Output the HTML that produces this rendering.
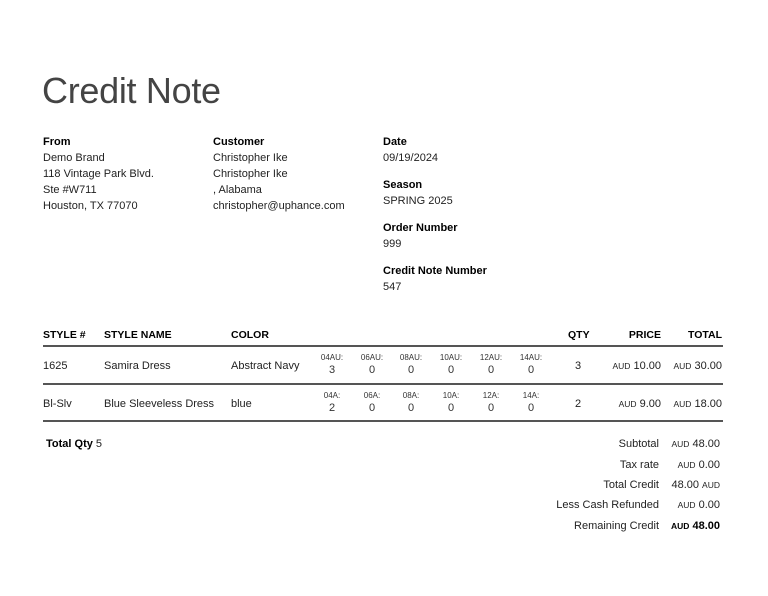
<!DOCTYPE html>
<html><head><style>
body{margin:0;width:768px;height:596px;background:#fff;font-family:"Liberation Sans",Arial,sans-serif;color:#222;position:relative;overflow:hidden}
.a{position:absolute;white-space:nowrap}
.t{font-size:11px;line-height:16px}
b{font-weight:bold;color:#000}
.h{font-size:10.5px;font-weight:bold;color:#000}
.sz{position:absolute;width:40px;text-align:center;color:#333}
.sz .l{font-size:8px;line-height:10px}
.sz .v{font-size:11px;line-height:14px}
.r{text-align:right}
.c{font-size:8.5px}
.line{position:absolute;left:43px;width:680px;height:1.5px;background:#555}
</style></head><body>
<div class="a" style="left:42px;top:70px;font-size:36px;color:#444;font-weight:300;letter-spacing:-0.3px">Credit Note</div>

<div class="a t" style="left:43px;top:134px"><b>From</b><br>Demo Brand<br>118 Vintage Park Blvd.<br>Ste #W711<br>Houston, TX 77070</div>
<div class="a t" style="left:213px;top:134px"><b>Customer</b><br>Christopher Ike<br>Christopher Ike<br>, Alabama<br>christopher@uphance.com</div>
<div class="a t" style="left:383px;top:134px"><b>Date</b><br>09/19/2024</div>
<div class="a t" style="left:383px;top:177px"><b>Season</b><br>SPRING 2025</div>
<div class="a t" style="left:383px;top:220px"><b>Order Number</b><br>999</div>
<div class="a t" style="left:383px;top:263px"><b>Credit Note Number</b><br>547</div>

<div class="a h" style="left:43px;top:329px">STYLE #</div>
<div class="a h" style="left:104px;top:329px">STYLE NAME</div>
<div class="a h" style="left:231px;top:329px">COLOR</div>
<div class="a h" style="left:568px;top:329px">QTY</div>
<div class="a h r" style="right:107px;top:329px">PRICE</div>
<div class="a h r" style="right:46px;top:329px">TOTAL</div>
<div class="line" style="top:345px"></div>

<div class="a t" style="left:43px;top:358px">1625</div>
<div class="a t" style="left:104px;top:358px">Samira Dress</div>
<div class="a t" style="left:231px;top:358px">Abstract Navy</div>
<div class="sz" style="left:312px;top:353px"><div class="l">04AU:</div><div class="v">3</div></div>
<div class="sz" style="left:352px;top:353px"><div class="l">06AU:</div><div class="v">0</div></div>
<div class="sz" style="left:391px;top:353px"><div class="l">08AU:</div><div class="v">0</div></div>
<div class="sz" style="left:431px;top:353px"><div class="l">10AU:</div><div class="v">0</div></div>
<div class="sz" style="left:471px;top:353px"><div class="l">12AU:</div><div class="v">0</div></div>
<div class="sz" style="left:511px;top:353px"><div class="l">14AU:</div><div class="v">0</div></div>
<div class="a t" style="left:575px;top:358px">3</div>
<div class="a t r" style="right:107px;top:358px"><span class="c">AUD</span> 10.00</div>
<div class="a t r" style="right:46px;top:358px"><span class="c">AUD</span> 30.00</div>
<div class="line" style="top:383px"></div>

<div class="a t" style="left:43px;top:396px">Bl-Slv</div>
<div class="a t" style="left:104px;top:396px">Blue Sleeveless Dress</div>
<div class="a t" style="left:231px;top:396px">blue</div>
<div class="sz" style="left:312px;top:391px"><div class="l">04A:</div><div class="v">2</div></div>
<div class="sz" style="left:352px;top:391px"><div class="l">06A:</div><div class="v">0</div></div>
<div class="sz" style="left:391px;top:391px"><div class="l">08A:</div><div class="v">0</div></div>
<div class="sz" style="left:431px;top:391px"><div class="l">10A:</div><div class="v">0</div></div>
<div class="sz" style="left:471px;top:391px"><div class="l">12A:</div><div class="v">0</div></div>
<div class="sz" style="left:511px;top:391px"><div class="l">14A:</div><div class="v">0</div></div>
<div class="a t" style="left:575px;top:396px">2</div>
<div class="a t r" style="right:107px;top:396px"><span class="c">AUD</span> 9.00</div>
<div class="a t r" style="right:46px;top:396px"><span class="c">AUD</span> 18.00</div>
<div class="line" style="top:420px"></div>

<div class="a t" style="left:46px;top:436px"><b>Total Qty</b> 5</div>
<div class="a t r" style="right:109px;top:436px">Subtotal</div>
<div class="a t r" style="right:48px;top:436px"><span class="c">AUD</span> 48.00</div>
<div class="a t r" style="right:109px;top:457px">Tax rate</div>
<div class="a t r" style="right:48px;top:457px"><span class="c">AUD</span> 0.00</div>
<div class="a t r" style="right:109px;top:477px">Total Credit</div>
<div class="a t r" style="right:48px;top:477px">48.00 <span class="c">AUD</span></div>
<div class="a t r" style="right:109px;top:497px">Less Cash Refunded</div>
<div class="a t r" style="right:48px;top:497px"><span class="c">AUD</span> 0.00</div>
<div class="a t r" style="right:109px;top:518px">Remaining Credit</div>
<div class="a t r" style="right:48px;top:518px"><b><span class="c">AUD</span> 48.00</b></div>
</body></html>
